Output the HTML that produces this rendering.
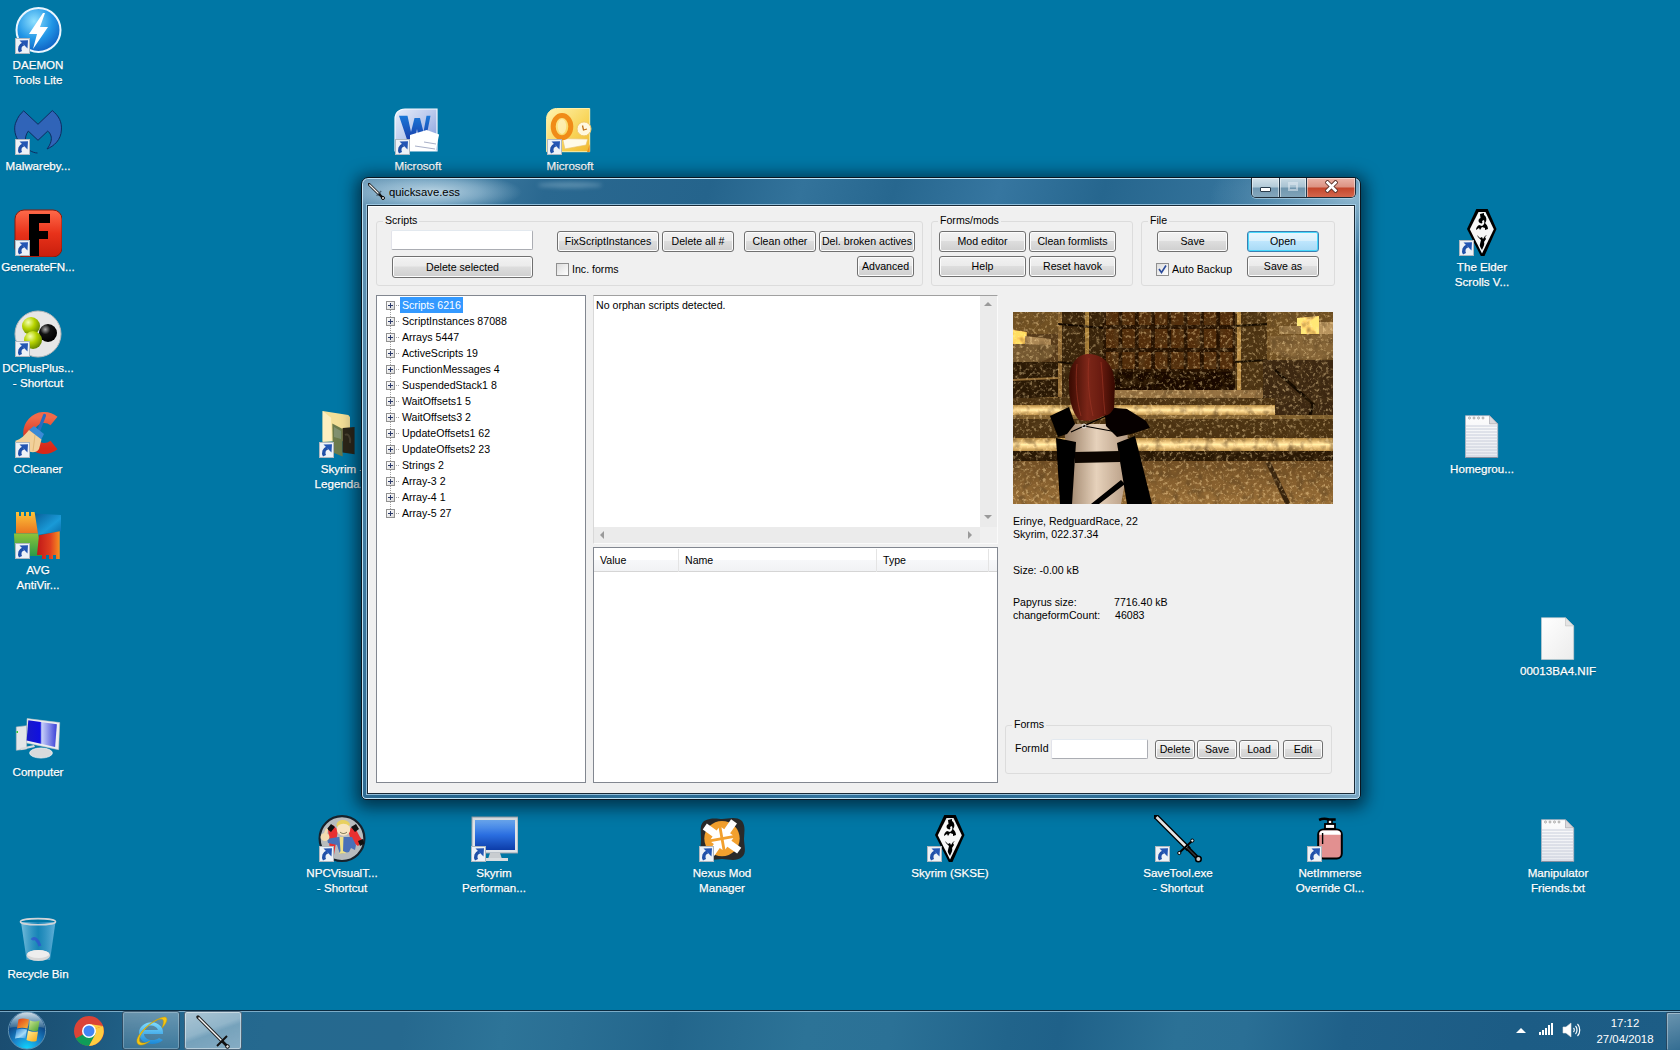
<!DOCTYPE html>
<html><head><meta charset="utf-8">
<style>
*{box-sizing:border-box;margin:0;padding:0}
html,body{width:1680px;height:1050px;overflow:hidden}
body{background:#0077a5;font-family:"Liberation Sans",sans-serif;position:relative}
.a{position:absolute}
/* desktop icons */
.ic{position:absolute;width:76px;height:100px}
.ic .g{position:absolute;left:14px;top:0;width:48px;height:48px}
.ic .t{position:absolute;left:-4px;top:50px;width:84px;text-align:center;color:#fff;font-size:11.6px;line-height:15px;-webkit-text-stroke:.25px #fff;text-shadow:0 1px 1px rgba(0,30,50,.35)}
.sc{position:absolute;left:0;top:32px}
/* window */
#win{left:361px;top:177px;width:1000px;height:623px;border:1px solid #0a1620;border-radius:7px 7px 5px 5px;
 background:linear-gradient(90deg,rgba(255,255,255,0) 0%,rgba(255,255,255,0) 100%),linear-gradient(105deg,#6a98b6 0%,#4a84a8 6%,#2a6890 16%,#25648c 30%,#33739b 38%,#27678f 46%,#3676a0 55%,#26668e 64%,#33729a 74%,#2a6a92 84%,#6292b2 94%,#7aa6c2 100%);box-shadow:0 3px 16px 5px rgba(0,10,20,.6),inset 0 0 0 1px #bfe3f5}
#client{left:368px;top:206px;width:986px;height:587px;background:#f0f0f0;box-shadow:0 0 0 1px #1a2a36,0 0 0 2px rgba(170,210,235,.8),inset 1px 1px 0 #fff}
.f{font-size:10.6px;color:#000;line-height:13px;white-space:nowrap}
.btn{position:absolute;border:1px solid #707070;border-radius:3px;background:linear-gradient(#f2f2f2 0%,#ebebeb 45%,#dddddd 50%,#cfcfcf 100%);font-size:10.6px;text-align:center;color:#000;box-shadow:inset 0 0 0 1px #fcfcfc}
.grp{position:absolute;border:1px solid #dcdcdc;border-radius:3px}
.grp span{position:absolute;left:6px;top:-8px;background:#f0f0f0;padding:0 2px;font-size:10.6px;line-height:13px}
.tb{position:absolute;background:#fff;border:1px solid #abadb3;border-top-color:#e3e9ef;border-left-color:#e2e3ea;border-radius:2px}
.cb{position:absolute;width:13px;height:13px;border:1px solid #8f8f8f;background:linear-gradient(135deg,#dcdcdc,#fff)}
.tree{position:absolute;background:#fff;border:1px solid #828790}
.ti{position:absolute;left:0;font-size:10.6px;line-height:16px;height:16px;white-space:nowrap}
/* taskbar */
#task{left:0;top:1010px;width:1680px;height:40px;background:linear-gradient(100deg,#1a4c70 0%,#1c5478 4%,#22668e 10%,#25698f 16%,#26698f 24%,#2d7498 30%,#2a6f94 34%,#23668c 40%,#2c7397 48%,#2b7196 53%,#21648b 60%,#1f6189 63%,#2b7196 70%,#2a6f95 74%,#1f6089 80%,#1c5c85 90%,#1d5d86 100%);border-top:1px solid #0a2a40}
</style></head><body>

<div id="desk">
<div class="ic" style="left:0px;top:7px"><div class="g"><svg width="48" height="48"><defs><radialGradient id="dg" cx=".4" cy=".3" r=".75"><stop offset="0" stop-color="#8fe0ff"/><stop offset=".55" stop-color="#2196e6"/><stop offset="1" stop-color="#0d5cc0"/></radialGradient></defs><circle cx="24.5" cy="23" r="22" fill="url(#dg)" stroke="#eaf6ff" stroke-width="2"/><path d="M29 6 L15 27 L23 27 L19 42 L34 20 L26 20 L31 6Z" fill="#fff"/></svg><svg class="sc" width="16" height="16" style="left:1px;top:31px"><rect x=".5" y=".5" width="14" height="15" fill="#eef2f7" stroke="#b0b8c0"/><path d="M5.5 13.8 C3.8 10.5 5 7 8.5 5.8" stroke="#2050a8" stroke-width="3.4" fill="none"/><path d="M4.5 2.5 L13 2.2 L12.5 10.5Z" fill="#2456b4"/></svg></div><div class="t">DAEMON<br>Tools Lite</div></div>
<div class="ic" style="left:0px;top:108px"><div class="g"><svg width="48" height="48"><path d="M9.7 2.9 L24 16.3 L38.3 2.6 C45 8 48 14 47.4 22 C47 32 40 38 33 41 C37 36 38 31 37 28 C36 25 35 24 33.7 23.1 L24 32.3 L14.3 23.1 C12 26 11 30 11.5 34 C12 38 14 41 16 42 C14 42 8 38 4 32 C0 26 0 18 2 14 C4 9 6 6 9.7 2.9Z" fill="#3064b8" stroke="#0e2c60" stroke-width="1"/><path d="M15 42 C18 44 21 45 23.5 45" stroke="#0e2c60" stroke-width="1" fill="none"/></svg><svg class="sc" width="16" height="16" style="left:1px;top:31px"><rect x=".5" y=".5" width="14" height="15" fill="#eef2f7" stroke="#b0b8c0"/><path d="M5.5 13.8 C3.8 10.5 5 7 8.5 5.8" stroke="#2050a8" stroke-width="3.4" fill="none"/><path d="M4.5 2.5 L13 2.2 L12.5 10.5Z" fill="#2456b4"/></svg></div><div class="t">Malwareby...</div></div>
<div class="ic" style="left:0px;top:209px"><div class="g"><svg width="48" height="48"><defs><linearGradient id="fr" x1="0" y1="0" x2="0" y2="1"><stop offset="0" stop-color="#ff6a4a"/><stop offset=".5" stop-color="#e8321a"/><stop offset="1" stop-color="#c81e0c"/></linearGradient></defs><rect x="1" y="1" width="47" height="47" rx="9" fill="url(#fr)" stroke="#8a1a0a"/><path d="M15 5 H36 V14 H25 V22 H34 V30 H25 V47 H15Z" fill="#000"/></svg><svg class="sc" width="16" height="16" style="left:1px;top:31px"><rect x=".5" y=".5" width="14" height="15" fill="#eef2f7" stroke="#b0b8c0"/><path d="M5.5 13.8 C3.8 10.5 5 7 8.5 5.8" stroke="#2050a8" stroke-width="3.4" fill="none"/><path d="M4.5 2.5 L13 2.2 L12.5 10.5Z" fill="#2456b4"/></svg></div><div class="t">GenerateFN...</div></div>
<div class="ic" style="left:0px;top:310px"><div class="g"><svg width="48" height="48"><defs><radialGradient id="gb" cx=".35" cy=".3" r=".7"><stop offset="0" stop-color="#f4ffb0"/><stop offset=".5" stop-color="#b8d400"/><stop offset="1" stop-color="#6a8a00"/></radialGradient><radialGradient id="bb" cx=".35" cy=".3" r=".7"><stop offset="0" stop-color="#aaa"/><stop offset=".4" stop-color="#111"/><stop offset="1" stop-color="#000"/></radialGradient></defs><circle cx="24" cy="24" r="23" fill="#e6e6e6" stroke="#bbb"/><circle cx="17" cy="16" r="9" fill="url(#gb)"/><circle cx="34" cy="23" r="9" fill="url(#bb)"/><circle cx="19" cy="30" r="9" fill="url(#gb)"/></svg><svg class="sc" width="16" height="16" style="left:1px;top:31px"><rect x=".5" y=".5" width="14" height="15" fill="#eef2f7" stroke="#b0b8c0"/><path d="M5.5 13.8 C3.8 10.5 5 7 8.5 5.8" stroke="#2050a8" stroke-width="3.4" fill="none"/><path d="M4.5 2.5 L13 2.2 L12.5 10.5Z" fill="#2456b4"/></svg></div><div class="t">DCPlusPlus...<br>- Shortcut</div></div>
<div class="ic" style="left:0px;top:411px"><div class="g"><svg width="48" height="48"><defs><linearGradient id="ccr" x1="0" y1="0" x2="0" y2="1"><stop offset="0" stop-color="#f06a4a"/><stop offset=".5" stop-color="#e0402a"/><stop offset="1" stop-color="#d82818"/></linearGradient></defs><path d="M40 10 A15.5 15.5 0 1 0 40 34" stroke="url(#ccr)" stroke-width="11" fill="none"/><path d="M30.5 4.5 L23 24" stroke="#2a6cc0" stroke-width="3.2" stroke-linecap="round"/><path d="M15 19 L20 15 L30 23 L27 29Z" fill="#3a8ad6"/><path d="M15 19 L27.5 28.5 L25 38 C21 44 12 42 1 30 C7 28 11 24 15 19Z" fill="#f2d09a"/><path d="M21 24 L19 40" stroke="#e0b878" stroke-width="1"/></svg><svg class="sc" width="16" height="16" style="left:1px;top:31px"><rect x=".5" y=".5" width="14" height="15" fill="#eef2f7" stroke="#b0b8c0"/><path d="M5.5 13.8 C3.8 10.5 5 7 8.5 5.8" stroke="#2050a8" stroke-width="3.4" fill="none"/><path d="M4.5 2.5 L13 2.2 L12.5 10.5Z" fill="#2456b4"/></svg></div><div class="t">CCleaner</div></div>
<div class="ic" style="left:0px;top:512px"><div class="g"><svg width="48" height="48"><defs><linearGradient id="ao" x1="0" y1="0" x2="0" y2="1"><stop offset="0" stop-color="#fcc43a"/><stop offset="1" stop-color="#ea7420"/></linearGradient><linearGradient id="ab" x1="0" y1="0" x2="1" y2="1"><stop offset="0" stop-color="#0a5c98"/><stop offset=".6" stop-color="#1ea0e0"/><stop offset="1" stop-color="#0a6aa8"/></linearGradient><linearGradient id="ag" x1="0" y1="0" x2="0" y2="1"><stop offset="0" stop-color="#8cc43a"/><stop offset="1" stop-color="#2a9a48"/></linearGradient><linearGradient id="ar" x1="0" y1="0" x2="1" y2="0"><stop offset="0" stop-color="#c01818"/><stop offset=".6" stop-color="#e04020"/><stop offset="1" stop-color="#f89020"/></linearGradient></defs><path d="M20.6 1.6 L47 3 L47 19.3 L24 22.7Z" fill="url(#ab)" opacity=".85"/><path d="M2 0 H5 V4 H7 V0 H10 V4 H12 V0 H15 V4 H17 V0 H20.6 L24 21.5 H2Z" fill="url(#ao)"/><path d="M0 21.6 H24 L28.6 44 H1Z" fill="url(#ag)"/><path d="M25 23.3 L45.7 19.3 V47 H42 V43 H39 V47 H35 V43 H32 V47 H28 V43 H23Z" fill="url(#ar)"/></svg><svg class="sc" width="16" height="16" style="left:1px;top:31px"><rect x=".5" y=".5" width="14" height="15" fill="#eef2f7" stroke="#b0b8c0"/><path d="M5.5 13.8 C3.8 10.5 5 7 8.5 5.8" stroke="#2050a8" stroke-width="3.4" fill="none"/><path d="M4.5 2.5 L13 2.2 L12.5 10.5Z" fill="#2456b4"/></svg></div><div class="t">AVG<br>AntiVir...</div></div>
<div class="ic" style="left:0px;top:714px"><div class="g"><svg width="48" height="48"><defs><linearGradient id="cs" x1="0" y1="0" x2="1" y2="0"><stop offset="0" stop-color="#1a1ac8"/><stop offset=".45" stop-color="#1010e0"/><stop offset=".5" stop-color="#c8d0f8"/><stop offset="1" stop-color="#3a40d8"/></linearGradient></defs><path d="M2.3 12.9 L12.6 11.7 L12.6 35.1 L2.3 36.3Z" fill="#e4e6e8" stroke="#b8bcc0" stroke-width=".6"/><rect x="2.5" y="17" width="1.5" height="2" fill="#3c3"/><path d="M6 34 L20 31 L21 33 L7 36Z" fill="#d8dadc"/><path d="M13.1 4.6 L45.7 8.6 L44.6 35.7 L12.6 28.9Z" fill="#eceef0" stroke="#c0c4c8" stroke-width=".6"/><path d="M14.3 6.3 L42.9 10.3 L41.1 32.9 L12.6 26.6Z" fill="url(#cs)"/><ellipse cx="27" cy="39" rx="11.4" ry="5" fill="#d8dadc" stroke="#f0f0f0" stroke-width=".8"/></svg></div><div class="t">Computer</div></div>
<div class="ic" style="left:0px;top:916px"><div class="g"><svg width="48" height="48"><defs><linearGradient id="rb" x1="0" x2="1"><stop offset="0" stop-color="#a8dcf4" stop-opacity=".7"/><stop offset=".5" stop-color="#3a9ad0" stop-opacity=".4"/><stop offset="1" stop-color="#8ccaee" stop-opacity=".7"/></linearGradient></defs><path d="M7 6 L12.6 44 L36 44 L41.5 6Z" fill="url(#rb)"/><path d="M18 24 C20 20 24 24 26 30" stroke="#3050d0" stroke-width="3" fill="none" opacity=".7"/><ellipse cx="24.3" cy="39.5" rx="11.7" ry="5.5" fill="#d8d8d8"/><ellipse cx="24.3" cy="38" rx="11" ry="4" fill="#eee"/><ellipse cx="24" cy="5.7" rx="17.5" ry="3.1" fill="none" stroke="#d0d4d8" stroke-width="1.6"/></svg></div><div class="t">Recycle Bin</div></div>
<div class="ic" style="left:304px;top:411px"><div class="g"><svg width="48" height="48"><path d="M4.6 0 L30.3 3.9 L32 6 L32 30 L4.6 30.7Z" fill="#f4e098"/><path d="M4.6 0 L13.1 6.7 L13.7 30.1 L4.6 30.7Z" fill="#fcefc0"/><path d="M14.3 12.4 L24.6 18.1 L24.6 45.6 L14.9 41.6Z" fill="#6c7a4c"/><path d="M16 16 L23 20 L23 28 L16 26Z" fill="#8a9a80" opacity=".7"/><path d="M24.6 17 L36.6 15.9 L36.6 43.3 L24.6 41.6Z" fill="#2c2618"/><path d="M27 24 C30 22 33 26 32 32" stroke="#4a4230" stroke-width="2" fill="none"/></svg><svg class="sc" width="16" height="16" style="left:1px;top:31px"><rect x=".5" y=".5" width="14" height="15" fill="#eef2f7" stroke="#b0b8c0"/><path d="M5.5 13.8 C3.8 10.5 5 7 8.5 5.8" stroke="#2050a8" stroke-width="3.4" fill="none"/><path d="M4.5 2.5 L13 2.2 L12.5 10.5Z" fill="#2456b4"/></svg></div><div class="t">Skyrim -<br>Legenda...</div></div>
<div class="ic" style="left:380px;top:108px"><div class="g"><svg width="48" height="48"><defs><linearGradient id="wbg" x1="0" y1="0" x2="1" y2="1"><stop offset="0" stop-color="#e8eefa"/><stop offset=".5" stop-color="#b8c8ec"/><stop offset="1" stop-color="#7a94d8"/></linearGradient><linearGradient id="wW" x1="0" y1="0" x2="0" y2="1"><stop offset="0" stop-color="#1a78d8"/><stop offset="1" stop-color="#1a3ca8"/></linearGradient></defs><path d="M11 1 H43 V43 H1 V11 C1 5 5 1 11 1Z" fill="url(#wbg)" stroke="#f4f8ff" stroke-width="1.2"/><path d="M5 7.7 H13.5 L17 24 L20.5 10 H26 L29.5 24 L32.5 7.7 H36.5 L31.5 33 H25.5 L23 21 L20.3 33 H13.5Z" fill="url(#wW)"/><path d="M16 27 L32.6 22 L45.1 26.6 L41.7 43.1 H16Z" fill="#fff"/><path d="M21 38 L41 41 M30 34 L42 36" stroke="#a8b0c8" stroke-width="1"/></svg><svg class="sc" width="16" height="16" style="left:1px;top:31px"><rect x=".5" y=".5" width="14" height="15" fill="#eef2f7" stroke="#b0b8c0"/><path d="M5.5 13.8 C3.8 10.5 5 7 8.5 5.8" stroke="#2050a8" stroke-width="3.4" fill="none"/><path d="M4.5 2.5 L13 2.2 L12.5 10.5Z" fill="#2456b4"/></svg></div><div class="t">Microsoft</div></div>
<div class="ic" style="left:532px;top:108px"><div class="g"><svg width="48" height="48"><defs><linearGradient id="obg" x1="0" y1="0" x2="1" y2="1"><stop offset="0" stop-color="#fff4b0"/><stop offset=".6" stop-color="#f8d458"/><stop offset="1" stop-color="#f0b830"/></linearGradient></defs><path d="M10.6 0.5 H43.7 V43.7 H0.6 V10.5 C0.6 5 5 0.5 10.6 0.5Z" fill="url(#obg)" stroke="#fff0a8" stroke-width="1"/><path d="M16.6 30.6 L41.7 31.1 L40 37 L18.9 40.9Z" fill="#fffbea" stroke="#e8c068" stroke-width=".6"/><ellipse cx="16" cy="18.6" rx="8.8" ry="11.2" fill="none" stroke="#f08c18" stroke-width="5"/><ellipse cx="16" cy="18.6" rx="4.2" ry="7.4" fill="#fff6d0" opacity=".6"/><circle cx="38" cy="20.9" r="7" fill="#fff8e0" stroke="#f0c868" stroke-width="1"/><path d="M36.5 17.5 L37.5 22 L41 21" stroke="#c07018" stroke-width="1.3" fill="none"/><path d="M41 44 L43.7 36 V44Z" fill="#e89020"/></svg><svg class="sc" width="16" height="16" style="left:1px;top:31px"><rect x=".5" y=".5" width="14" height="15" fill="#eef2f7" stroke="#b0b8c0"/><path d="M5.5 13.8 C3.8 10.5 5 7 8.5 5.8" stroke="#2050a8" stroke-width="3.4" fill="none"/><path d="M4.5 2.5 L13 2.2 L12.5 10.5Z" fill="#2456b4"/></svg></div><div class="t">Microsoft</div></div>
<div class="ic" style="left:304px;top:815px"><div class="g"><svg width="48" height="48"><circle cx="24" cy="23.6" r="22.4" fill="#b8bcbe" stroke="#16222c" stroke-width="2.2"/><path d="M10 13 L15 10 L20 15 L16 40 L12 38Z" fill="#e83030"/><path d="M30 15 L36 11 L42 22 L45 26 L40 31 L33 26Z" fill="#e83030"/><path d="M9 14 L13 9 L17 12 L13 17Z M33 12 L38 9 L41 14 L37 17Z M40 26 L45 24 L46 29 L42 31Z" fill="#111"/><path d="M20 22 L34 22 L38 30 L37 35 L33 33 L31 37 L22 39 L19 30 L10 28 L9 24Z" fill="#4a70b8"/><path d="M21.5 22 L25.5 22 L25 36 L29 38 L21 39 L22.5 36Z" fill="#f0e088"/><ellipse cx="7" cy="22" rx="4.5" ry="4" fill="#f4dcb0"/><path d="M6 18 L8 13 L10 14 L9 19Z" fill="#f4dcb0"/><circle cx="25.5" cy="14" r="6.8" fill="#f8e4c0"/><path d="M18.5 10 C19 4 29 3 32 9 L31 11 C28 8 22 8 19 12Z" fill="#e8d060"/><path d="M22 17 C24 19 27 19 29 17" stroke="#553" stroke-width=".8" fill="none"/></svg><svg class="sc" width="16" height="16" style="left:1px;top:31px"><rect x=".5" y=".5" width="14" height="15" fill="#eef2f7" stroke="#b0b8c0"/><path d="M5.5 13.8 C3.8 10.5 5 7 8.5 5.8" stroke="#2050a8" stroke-width="3.4" fill="none"/><path d="M4.5 2.5 L13 2.2 L12.5 10.5Z" fill="#2456b4"/></svg></div><div class="t">NPCVisualT...<br>- Shortcut</div></div>
<div class="ic" style="left:456px;top:815px"><div class="g"><svg width="48" height="48"><defs><linearGradient id="sp" x1="0" y1="0" x2="0" y2="1"><stop offset="0" stop-color="#6aa8f0"/><stop offset=".5" stop-color="#2a6ee0"/><stop offset="1" stop-color="#0c3ca8"/></linearGradient></defs><rect x="2" y="2" width="46" height="36" fill="#e0e4e8" stroke="#98a2ac"/><rect x="5" y="5" width="40" height="30" fill="url(#sp)"/><path d="M20 38 H30 L32 44 H18Z" fill="#c8ccd0"/><rect x="12" y="43" width="26" height="3" fill="#d8dcdf"/></svg><svg class="sc" width="16" height="16" style="left:1px;top:31px"><rect x=".5" y=".5" width="14" height="15" fill="#eef2f7" stroke="#b0b8c0"/><path d="M5.5 13.8 C3.8 10.5 5 7 8.5 5.8" stroke="#2050a8" stroke-width="3.4" fill="none"/><path d="M4.5 2.5 L13 2.2 L12.5 10.5Z" fill="#2456b4"/></svg></div><div class="t">Skyrim<br>Performan...</div></div>
<div class="ic" style="left:684px;top:815px"><div class="g"><svg width="48" height="48"><path d="M6 6 C14 2 20 4 24 4 C30 4 38 1 44 6 C48 12 46 18 46 24 C46 30 49 38 44 42 C38 47 30 44 24 44 C18 44 10 47 5 42 C1 36 3 30 3 24 C3 18 1 10 6 6Z" fill="#2a2a2a"/><circle cx="24" cy="23.6" r="17.7" fill="#f2a02e"/><g transform="translate(24 23.6) rotate(35) translate(-3 0)"><path d="M-18 -3.6 L-6 -3.6 L-6 -7 L1 0 L-6 7 L-6 3.6 L-18 3.6Z" fill="#fff"/></g><g transform="translate(24 23.6) rotate(125) translate(-3 0)"><path d="M-18 -3.6 L-6 -3.6 L-6 -7 L1 0 L-6 7 L-6 3.6 L-18 3.6Z" fill="#fff"/></g><g transform="translate(24 23.6) rotate(215) translate(-3 0)"><path d="M-18 -3.6 L-6 -3.6 L-6 -7 L1 0 L-6 7 L-6 3.6 L-18 3.6Z" fill="#fff"/></g><g transform="translate(24 23.6) rotate(305) translate(-3 0)"><path d="M-18 -3.6 L-6 -3.6 L-6 -7 L1 0 L-6 7 L-6 3.6 L-18 3.6Z" fill="#fff"/></g></svg><svg class="sc" width="16" height="16" style="left:1px;top:31px"><rect x=".5" y=".5" width="14" height="15" fill="#eef2f7" stroke="#b0b8c0"/><path d="M5.5 13.8 C3.8 10.5 5 7 8.5 5.8" stroke="#2050a8" stroke-width="3.4" fill="none"/><path d="M4.5 2.5 L13 2.2 L12.5 10.5Z" fill="#2456b4"/></svg></div><div class="t">Nexus Mod<br>Manager</div></div>
<div class="ic" style="left:912px;top:815px"><div class="g"><svg width="48" height="48"><path d="M18.3 0 H29.7 L38.5 20 L26.5 47 H22.8 L9 20Z" fill="#000"/><path d="M20.5 3 H27.5 L35.8 20.2 L24 44.5 L11.8 20.2Z" fill="#f8f8f8"/><path d="M22 5 L22.5 9 C20 10 20 13 22 14 C24 15 25 14 24 12 L26 11 C27 14 26 16 24 17 L21 16 C19 17 18 19 18 21 L21 19 L22 21 L24 18 L27 19 L27 21 L30 20 C30 17 28 15 27 14 C29 12 29 8 26 6 L26 4Z" fill="#000"/><path d="M19 26 L21 30 L20 28 L23 31 L22 35 C21 37 23 39 24 41 C25 38 27 36 26 33 L28 30 L27 28 L29 26 L27 27 L25 30 L24 28 L22 29 Z" fill="#000"/></svg><svg class="sc" width="16" height="16" style="left:1px;top:31px"><rect x=".5" y=".5" width="14" height="15" fill="#eef2f7" stroke="#b0b8c0"/><path d="M5.5 13.8 C3.8 10.5 5 7 8.5 5.8" stroke="#2050a8" stroke-width="3.4" fill="none"/><path d="M4.5 2.5 L13 2.2 L12.5 10.5Z" fill="#2456b4"/></svg></div><div class="t">Skyrim (SKSE)</div></div>
<div class="ic" style="left:1140px;top:815px"><div class="g"><svg width="48" height="48"><path d="M2 1.5 L33 32.5" stroke="#000" stroke-width="5.4" stroke-linecap="square"/><path d="M2.5 2 L33 32.5" stroke="#e8e8e8" stroke-width="2.6"/><path d="M25.5 37.5 L38 26" stroke="#000" stroke-width="2"/><circle cx="38.3" cy="25.6" r="1.6" fill="#eee" stroke="#000" stroke-width="1"/><circle cx="25.3" cy="38" r="1.6" fill="#eee" stroke="#000" stroke-width="1"/><path d="M33 32.5 L42.5 42" stroke="#000" stroke-width="4.4"/><path d="M33 32.5 L42 41.5" stroke="#333" stroke-width="1.6"/><circle cx="44.4" cy="44" r="2.8" fill="#ccc" stroke="#000" stroke-width="1.6"/></svg><svg class="sc" width="16" height="16" style="left:1px;top:31px"><rect x=".5" y=".5" width="14" height="15" fill="#eef2f7" stroke="#b0b8c0"/><path d="M5.5 13.8 C3.8 10.5 5 7 8.5 5.8" stroke="#2050a8" stroke-width="3.4" fill="none"/><path d="M4.5 2.5 L13 2.2 L12.5 10.5Z" fill="#2456b4"/></svg></div><div class="t">SaveTool.exe<br>- Shortcut</div></div>
<div class="ic" style="left:1292px;top:815px"><div class="g"><svg width="48" height="48"><path d="M13.1 5 C16 3.5 20 3.5 23 4.5 L29.7 4.5" stroke="#000" stroke-width="2.6" fill="none"/><rect x="22" y="5" width="4" height="4" fill="#fff" stroke="#000" stroke-width="1.6"/><rect x="19" y="9" width="10" height="4.8" fill="#fff" stroke="#000" stroke-width="1.8"/><rect x="12.2" y="14.6" width="23.6" height="29" rx="5" fill="#e29090" stroke="#000" stroke-width="2"/><path d="M13.3 19.7 V19 C13.3 17 15 15.6 17 15.6 H31 C33 15.6 34.8 17 34.8 19 V19.7Z" fill="#fff"/><path d="M16.6 18 V29" stroke="#000" stroke-width="1.4"/></svg><svg class="sc" width="16" height="16" style="left:1px;top:31px"><rect x=".5" y=".5" width="14" height="15" fill="#eef2f7" stroke="#b0b8c0"/><path d="M5.5 13.8 C3.8 10.5 5 7 8.5 5.8" stroke="#2050a8" stroke-width="3.4" fill="none"/><path d="M4.5 2.5 L13 2.2 L12.5 10.5Z" fill="#2456b4"/></svg></div><div class="t">NetImmerse<br>Override Cl...</div></div>
<div class="ic" style="left:1520px;top:815px"><div class="g"><svg width="48" height="48"><defs><linearGradient id="dg1b" x1="0" y1="0" x2="0" y2="1"><stop offset="0" stop-color="#fdfdfd"/><stop offset="1" stop-color="#e8eaf0"/></linearGradient></defs><path d="M7.5 4.7 H31.5 L39.7 12.9 V46.5 H7.5Z" fill="url(#dg1b)" stroke="#b0b4c0" stroke-width=".8"/><path d="M31.5 4.7 V12.9 H39.7Z" fill="#d8d8dc" stroke="#a0a0a8" stroke-width=".6"/><g stroke="#c4cad8" stroke-width=".9"><path d="M8 15 H39.3"/><path d="M8 18 H39.3"/><path d="M8 21 H39.3"/><path d="M8 24 H39.3"/><path d="M8 27 H39.3"/><path d="M8 30 H39.3"/><path d="M8 33 H39.3"/><path d="M8 36 H39.3"/><path d="M8 39 H39.3"/><path d="M8 42 H39.3"/><path d="M8 45 H39.3"/></g><g fill="#fff" stroke="#888" stroke-width=".7"><circle cx="11.5" cy="7" r="1"/><circle cx="16" cy="7" r="1"/><circle cx="20.5" cy="7" r="1"/><circle cx="25" cy="7" r="1"/></g><path d="M7.5 46.5 H39.7" stroke="#8890a0" stroke-width="1"/></svg></div><div class="t">Manipulator<br>Friends.txt</div></div>
<div class="ic" style="left:1444px;top:209px"><div class="g"><svg width="48" height="48"><path d="M18.3 0 H29.7 L38.5 20 L26.5 47 H22.8 L9 20Z" fill="#000"/><path d="M20.5 3 H27.5 L35.8 20.2 L24 44.5 L11.8 20.2Z" fill="#f8f8f8"/><path d="M22 5 L22.5 9 C20 10 20 13 22 14 C24 15 25 14 24 12 L26 11 C27 14 26 16 24 17 L21 16 C19 17 18 19 18 21 L21 19 L22 21 L24 18 L27 19 L27 21 L30 20 C30 17 28 15 27 14 C29 12 29 8 26 6 L26 4Z" fill="#000"/><path d="M19 26 L21 30 L20 28 L23 31 L22 35 C21 37 23 39 24 41 C25 38 27 36 26 33 L28 30 L27 28 L29 26 L27 27 L25 30 L24 28 L22 29 Z" fill="#000"/></svg><svg class="sc" width="16" height="16" style="left:1px;top:31px"><rect x=".5" y=".5" width="14" height="15" fill="#eef2f7" stroke="#b0b8c0"/><path d="M5.5 13.8 C3.8 10.5 5 7 8.5 5.8" stroke="#2050a8" stroke-width="3.4" fill="none"/><path d="M4.5 2.5 L13 2.2 L12.5 10.5Z" fill="#2456b4"/></svg></div><div class="t">The Elder<br>Scrolls V...</div></div>
<div class="ic" style="left:1444px;top:411px"><div class="g"><svg width="48" height="48"><defs><linearGradient id="dg1" x1="0" y1="0" x2="0" y2="1"><stop offset="0" stop-color="#fdfdfd"/><stop offset="1" stop-color="#e8eaf0"/></linearGradient></defs><path d="M7.5 4.7 H31.5 L39.7 12.9 V46.5 H7.5Z" fill="url(#dg1)" stroke="#b0b4c0" stroke-width=".8"/><path d="M31.5 4.7 V12.9 H39.7Z" fill="#d8d8dc" stroke="#a0a0a8" stroke-width=".6"/><g stroke="#c4cad8" stroke-width=".9"><path d="M8 15 H39.3"/><path d="M8 18 H39.3"/><path d="M8 21 H39.3"/><path d="M8 24 H39.3"/><path d="M8 27 H39.3"/><path d="M8 30 H39.3"/><path d="M8 33 H39.3"/><path d="M8 36 H39.3"/><path d="M8 39 H39.3"/><path d="M8 42 H39.3"/><path d="M8 45 H39.3"/></g><g fill="#fff" stroke="#888" stroke-width=".7"><circle cx="11.5" cy="7" r="1"/><circle cx="16" cy="7" r="1"/><circle cx="20.5" cy="7" r="1"/><circle cx="25" cy="7" r="1"/></g><path d="M7.5 46.5 H39.7" stroke="#8890a0" stroke-width="1"/></svg></div><div class="t">Homegrou...</div></div>
<div class="ic" style="left:1520px;top:613px"><div class="g"><svg width="48" height="48"><defs><linearGradient id="dg2" x1="0" y1="0" x2="1" y2="1"><stop offset="0" stop-color="#ffffff"/><stop offset="1" stop-color="#ececec"/></linearGradient></defs><path d="M7.5 4.7 H31.5 L39.7 12.9 V46.5 H7.5Z" fill="url(#dg2)" stroke="#d0d0d0" stroke-width=".6"/><path d="M31.5 4.7 V12.9 H39.7Z" fill="#e4e4e4" stroke="#c0c0c0" stroke-width=".6"/></svg></div><div class="t">00013BA4.NIF</div></div>
</div>

<div id="win" class="a"></div>
<div class="a" style="left:1150px;top:178px;width:210px;height:621px;border-radius:0 6px 0 0;background:radial-gradient(ellipse 140px 60px at 200px 20px,rgba(170,205,225,.75) 0%,rgba(150,190,215,.35) 60%,rgba(150,190,215,0) 100%)"></div>
<div class="a" style="left:538px;top:182px;width:64px;height:6px;border-radius:50%;background:rgba(200,225,240,.3);filter:blur(2px)"></div>
<div class="a" id="ttlglow" style="left:362px;top:178px;width:200px;height:27px;border-radius:6px 0 0 0;background:radial-gradient(ellipse 90px 20px at 70px 14px,rgba(225,240,248,.75) 0%,rgba(200,225,240,.45) 55%,rgba(180,215,235,0) 100%)"></div>
<svg class="a" style="left:368px;top:183px" width="18" height="18"><path d="M1 1.2 L11 11" stroke="#222" stroke-width="3" stroke-linecap="round"/><path d="M1.3 1.5 L11 11" stroke="#f4f4f4" stroke-width="1.1"/><path d="M8.6 12.8 L13.2 8" stroke="#3a5060" stroke-width="1.3" opacity=".8"/><path d="M11 11 L14.6 14.6" stroke="#111" stroke-width="2.4"/><circle cx="15" cy="15" r="1.5" fill="#fff" stroke="#000" stroke-width="1"/></svg>
<div class="a" style="left:389px;top:184px;font-size:11.3px;line-height:16px;color:#000">quicksave.ess</div>
<div class="a" style="left:1251px;top:178px;width:105px;height:20px;border:1px solid #1e2c38;border-top:none;border-radius:0 0 5px 5px;overflow:hidden;display:flex;box-shadow:0 1px 0 rgba(200,230,245,.55)">
<div style="width:28px;height:20px;border-right:1px solid #24384a;background:linear-gradient(#d4e2ea 0%,#b2cad8 45%,#7399b2 50%,#86a8bd 100%);box-shadow:inset 0 0 0 1px rgba(255,255,255,.5);position:relative;border-radius:0 0 0 4px"><div style="position:absolute;left:8px;top:9px;width:11px;height:5px;background:#fff;border:1px solid #2a3c4c;border-radius:1px"></div></div>
<div style="width:27px;height:20px;border-right:1px solid #24384a;background:linear-gradient(#c8dae4 0%,#a8c2d2 45%,#7096ae 50%,#82a4b9 100%);box-shadow:inset 0 0 0 1px rgba(255,255,255,.5);position:relative"><div style="position:absolute;left:8px;top:4px;width:10px;height:9px;border:2px solid rgba(225,235,242,.55);border-top-width:3px"></div></div>
<div style="flex:1;height:20px;background:linear-gradient(#eab4a8 0%,#dc9282 45%,#c4462c 50%,#d66a50 100%);box-shadow:inset 0 0 0 1px rgba(255,255,255,.45);position:relative;border-radius:0 0 4px 0"><svg style="position:absolute;left:18px;top:2px" width="13" height="13"><path d="M2.5 2.5 L10.5 10.5 M10.5 2.5 L2.5 10.5" stroke="#5a3028" stroke-width="4.4" stroke-linecap="square"/><path d="M2.5 2.5 L10.5 10.5 M10.5 2.5 L2.5 10.5" stroke="#fff" stroke-width="2.6" stroke-linecap="square"/></svg></div>
</div>
<div id="client" class="a"></div>
<div class="grp" style="left:376px;top:221px;width:547px;height:65px"><span>Scripts</span></div>
<div class="grp" style="left:931px;top:221px;width:202px;height:65px"><span>Forms/mods</span></div>
<div class="grp" style="left:1141px;top:221px;width:194px;height:65px"><span>File</span></div>
<div class="grp" style="left:1005px;top:725px;width:327px;height:49px"><span>Forms</span></div>
<div class="tb" style="left:391px;top:230px;width:142px;height:20px"></div>
<div class="tb" style="left:1051px;top:739px;width:97px;height:20px"></div>
<div class="btn" style="left:392px;top:256px;width:141px;height:22px;line-height:20px">Delete selected</div>
<div class="btn" style="left:557px;top:231px;width:102px;height:21px;line-height:19px">FixScriptInstances</div>
<div class="btn" style="left:662px;top:231px;width:72px;height:21px;line-height:19px">Delete all #</div>
<div class="btn" style="left:744px;top:231px;width:72px;height:21px;line-height:19px">Clean other</div>
<div class="btn" style="left:819px;top:231px;width:96px;height:21px;line-height:19px">Del. broken actives</div>
<div class="btn" style="left:857px;top:256px;width:57px;height:21px;line-height:19px">Advanced</div>
<div class="btn" style="left:939px;top:231px;width:87px;height:21px;line-height:19px">Mod editor</div>
<div class="btn" style="left:1029px;top:231px;width:87px;height:21px;line-height:19px">Clean formlists</div>
<div class="btn" style="left:939px;top:256px;width:87px;height:21px;line-height:19px">Help</div>
<div class="btn" style="left:1029px;top:256px;width:87px;height:21px;line-height:19px">Reset havok</div>
<div class="btn" style="left:1157px;top:231px;width:71px;height:21px;line-height:19px">Save</div>
<div class="btn" style="left:1247px;top:231px;width:72px;height:21px;line-height:19px;border-color:#3c7fb1;background:linear-gradient(#eaf6fd 0%,#d9f0fc 45%,#bee6fd 50%,#a7d9f5 100%);box-shadow:inset 0 0 0 1px #48d8fb">Open</div>
<div class="btn" style="left:1247px;top:256px;width:72px;height:21px;line-height:19px">Save as</div>
<div class="btn" style="left:1155px;top:740px;width:40px;height:19px;line-height:17px">Delete</div>
<div class="btn" style="left:1197px;top:740px;width:40px;height:19px;line-height:17px">Save</div>
<div class="btn" style="left:1239px;top:740px;width:40px;height:19px;line-height:17px">Load</div>
<div class="btn" style="left:1283px;top:740px;width:40px;height:19px;line-height:17px">Edit</div>
<div class="cb" style="left:556px;top:263px"></div><div class="a f" style="left:572px;top:263px">Inc. forms</div>
<div class="cb" style="left:1156px;top:263px"><svg width="11" height="11" style="position:absolute;left:0;top:0"><path d="M2 5 L4.5 8.5 L9 1.5" stroke="#2a4a9a" stroke-width="1.6" fill="none"/></svg></div><div class="a f" style="left:1172px;top:263px">Auto Backup</div>
<div class="tree" style="left:376px;top:295px;width:210px;height:488px"></div>
<div class="a" style="left:390px;top:310px;width:1px;height:200px;background:repeating-linear-gradient(#a0a0a0 0 1px,transparent 1px 2px)"></div>
<div class="a" style="left:386px;top:301px;width:9px;height:9px;border:1px solid #919191;background:linear-gradient(135deg,#fff,#d8d8d8)"><div style="position:absolute;left:1px;top:3px;width:5px;height:1px;background:#2b3a6a"></div><div style="position:absolute;left:3px;top:1px;width:1px;height:5px;background:#2b3a6a"></div></div><div class="a" style="left:396px;top:305px;width:4px;height:1px;background:repeating-linear-gradient(90deg,#a0a0a0 0 1px,transparent 1px 2px)"></div><div class="a" style="left:400px;top:297px;width:63px;height:16px;background:#3399ff"></div><div class="a f" style="left:402px;top:298px;color:#fff;line-height:14px">Scripts 6216</div>
<div class="a" style="left:386px;top:317px;width:9px;height:9px;border:1px solid #919191;background:linear-gradient(135deg,#fff,#d8d8d8)"><div style="position:absolute;left:1px;top:3px;width:5px;height:1px;background:#2b3a6a"></div><div style="position:absolute;left:3px;top:1px;width:1px;height:5px;background:#2b3a6a"></div></div><div class="a" style="left:396px;top:321px;width:4px;height:1px;background:repeating-linear-gradient(90deg,#a0a0a0 0 1px,transparent 1px 2px)"></div><div class="a f" style="left:402px;top:314px;line-height:14px">ScriptInstances 87088</div>
<div class="a" style="left:386px;top:333px;width:9px;height:9px;border:1px solid #919191;background:linear-gradient(135deg,#fff,#d8d8d8)"><div style="position:absolute;left:1px;top:3px;width:5px;height:1px;background:#2b3a6a"></div><div style="position:absolute;left:3px;top:1px;width:1px;height:5px;background:#2b3a6a"></div></div><div class="a" style="left:396px;top:337px;width:4px;height:1px;background:repeating-linear-gradient(90deg,#a0a0a0 0 1px,transparent 1px 2px)"></div><div class="a f" style="left:402px;top:330px;line-height:14px">Arrays 5447</div>
<div class="a" style="left:386px;top:349px;width:9px;height:9px;border:1px solid #919191;background:linear-gradient(135deg,#fff,#d8d8d8)"><div style="position:absolute;left:1px;top:3px;width:5px;height:1px;background:#2b3a6a"></div><div style="position:absolute;left:3px;top:1px;width:1px;height:5px;background:#2b3a6a"></div></div><div class="a" style="left:396px;top:353px;width:4px;height:1px;background:repeating-linear-gradient(90deg,#a0a0a0 0 1px,transparent 1px 2px)"></div><div class="a f" style="left:402px;top:346px;line-height:14px">ActiveScripts 19</div>
<div class="a" style="left:386px;top:365px;width:9px;height:9px;border:1px solid #919191;background:linear-gradient(135deg,#fff,#d8d8d8)"><div style="position:absolute;left:1px;top:3px;width:5px;height:1px;background:#2b3a6a"></div><div style="position:absolute;left:3px;top:1px;width:1px;height:5px;background:#2b3a6a"></div></div><div class="a" style="left:396px;top:369px;width:4px;height:1px;background:repeating-linear-gradient(90deg,#a0a0a0 0 1px,transparent 1px 2px)"></div><div class="a f" style="left:402px;top:362px;line-height:14px">FunctionMessages 4</div>
<div class="a" style="left:386px;top:381px;width:9px;height:9px;border:1px solid #919191;background:linear-gradient(135deg,#fff,#d8d8d8)"><div style="position:absolute;left:1px;top:3px;width:5px;height:1px;background:#2b3a6a"></div><div style="position:absolute;left:3px;top:1px;width:1px;height:5px;background:#2b3a6a"></div></div><div class="a" style="left:396px;top:385px;width:4px;height:1px;background:repeating-linear-gradient(90deg,#a0a0a0 0 1px,transparent 1px 2px)"></div><div class="a f" style="left:402px;top:378px;line-height:14px">SuspendedStack1 8</div>
<div class="a" style="left:386px;top:397px;width:9px;height:9px;border:1px solid #919191;background:linear-gradient(135deg,#fff,#d8d8d8)"><div style="position:absolute;left:1px;top:3px;width:5px;height:1px;background:#2b3a6a"></div><div style="position:absolute;left:3px;top:1px;width:1px;height:5px;background:#2b3a6a"></div></div><div class="a" style="left:396px;top:401px;width:4px;height:1px;background:repeating-linear-gradient(90deg,#a0a0a0 0 1px,transparent 1px 2px)"></div><div class="a f" style="left:402px;top:394px;line-height:14px">WaitOffsets1 5</div>
<div class="a" style="left:386px;top:413px;width:9px;height:9px;border:1px solid #919191;background:linear-gradient(135deg,#fff,#d8d8d8)"><div style="position:absolute;left:1px;top:3px;width:5px;height:1px;background:#2b3a6a"></div><div style="position:absolute;left:3px;top:1px;width:1px;height:5px;background:#2b3a6a"></div></div><div class="a" style="left:396px;top:417px;width:4px;height:1px;background:repeating-linear-gradient(90deg,#a0a0a0 0 1px,transparent 1px 2px)"></div><div class="a f" style="left:402px;top:410px;line-height:14px">WaitOffsets3 2</div>
<div class="a" style="left:386px;top:429px;width:9px;height:9px;border:1px solid #919191;background:linear-gradient(135deg,#fff,#d8d8d8)"><div style="position:absolute;left:1px;top:3px;width:5px;height:1px;background:#2b3a6a"></div><div style="position:absolute;left:3px;top:1px;width:1px;height:5px;background:#2b3a6a"></div></div><div class="a" style="left:396px;top:433px;width:4px;height:1px;background:repeating-linear-gradient(90deg,#a0a0a0 0 1px,transparent 1px 2px)"></div><div class="a f" style="left:402px;top:426px;line-height:14px">UpdateOffsets1 62</div>
<div class="a" style="left:386px;top:445px;width:9px;height:9px;border:1px solid #919191;background:linear-gradient(135deg,#fff,#d8d8d8)"><div style="position:absolute;left:1px;top:3px;width:5px;height:1px;background:#2b3a6a"></div><div style="position:absolute;left:3px;top:1px;width:1px;height:5px;background:#2b3a6a"></div></div><div class="a" style="left:396px;top:449px;width:4px;height:1px;background:repeating-linear-gradient(90deg,#a0a0a0 0 1px,transparent 1px 2px)"></div><div class="a f" style="left:402px;top:442px;line-height:14px">UpdateOffsets2 23</div>
<div class="a" style="left:386px;top:461px;width:9px;height:9px;border:1px solid #919191;background:linear-gradient(135deg,#fff,#d8d8d8)"><div style="position:absolute;left:1px;top:3px;width:5px;height:1px;background:#2b3a6a"></div><div style="position:absolute;left:3px;top:1px;width:1px;height:5px;background:#2b3a6a"></div></div><div class="a" style="left:396px;top:465px;width:4px;height:1px;background:repeating-linear-gradient(90deg,#a0a0a0 0 1px,transparent 1px 2px)"></div><div class="a f" style="left:402px;top:458px;line-height:14px">Strings 2</div>
<div class="a" style="left:386px;top:477px;width:9px;height:9px;border:1px solid #919191;background:linear-gradient(135deg,#fff,#d8d8d8)"><div style="position:absolute;left:1px;top:3px;width:5px;height:1px;background:#2b3a6a"></div><div style="position:absolute;left:3px;top:1px;width:1px;height:5px;background:#2b3a6a"></div></div><div class="a" style="left:396px;top:481px;width:4px;height:1px;background:repeating-linear-gradient(90deg,#a0a0a0 0 1px,transparent 1px 2px)"></div><div class="a f" style="left:402px;top:474px;line-height:14px">Array-3 2</div>
<div class="a" style="left:386px;top:493px;width:9px;height:9px;border:1px solid #919191;background:linear-gradient(135deg,#fff,#d8d8d8)"><div style="position:absolute;left:1px;top:3px;width:5px;height:1px;background:#2b3a6a"></div><div style="position:absolute;left:3px;top:1px;width:1px;height:5px;background:#2b3a6a"></div></div><div class="a" style="left:396px;top:497px;width:4px;height:1px;background:repeating-linear-gradient(90deg,#a0a0a0 0 1px,transparent 1px 2px)"></div><div class="a f" style="left:402px;top:490px;line-height:14px">Array-4 1</div>
<div class="a" style="left:386px;top:509px;width:9px;height:9px;border:1px solid #919191;background:linear-gradient(135deg,#fff,#d8d8d8)"><div style="position:absolute;left:1px;top:3px;width:5px;height:1px;background:#2b3a6a"></div><div style="position:absolute;left:3px;top:1px;width:1px;height:5px;background:#2b3a6a"></div></div><div class="a" style="left:396px;top:513px;width:4px;height:1px;background:repeating-linear-gradient(90deg,#a0a0a0 0 1px,transparent 1px 2px)"></div><div class="a f" style="left:402px;top:506px;line-height:14px">Array-5 27</div>
<div class="a" style="left:593px;top:295px;width:405px;height:249px;background:#fff;border:1px solid;border-color:#a0a0a0 #fafafa #fafafa #d8d8d8"></div>
<div class="a f" style="left:596px;top:299px">No orphan scripts detected.</div>
<div class="a" style="left:980px;top:296px;width:17px;height:231px;background:#ebebeb"></div>
<div class="a" style="left:594px;top:527px;width:386px;height:16px;background:#ebebeb"></div>
<div class="a" style="left:980px;top:527px;width:17px;height:16px;background:#f0f0f0"></div>
<svg class="a" style="left:983px;top:300px" width="10" height="8"><path d="M1 6 L5 2 L9 6Z" fill="#9a9a9a"/></svg><svg class="a" style="left:983px;top:513px" width="10" height="8"><path d="M1 2 L5 6 L9 2Z" fill="#9a9a9a"/></svg><svg class="a" style="left:598px;top:530px" width="8" height="10"><path d="M6 1 L2 5 L6 9Z" fill="#9a9a9a"/></svg><svg class="a" style="left:966px;top:530px" width="8" height="10"><path d="M2 1 L6 5 L2 9Z" fill="#9a9a9a"/></svg>
<div class="a" style="left:593px;top:547px;width:405px;height:236px;background:#fff;border:1px solid #828790"></div>
<div class="a" style="left:594px;top:548px;width:403px;height:24px;background:linear-gradient(#ffffff 0%,#ffffff 50%,#f7f8fa 51%,#f1f2f4 100%);border-bottom:1px solid #d5d5d5"></div>
<div class="a" style="left:678px;top:549px;width:1px;height:23px;background:#e4e4e4"></div><div class="a" style="left:876px;top:549px;width:1px;height:23px;background:#e4e4e4"></div><div class="a" style="left:988px;top:549px;width:1px;height:23px;background:#e4e4e4"></div><div class="a f" style="left:600px;top:554px">Value</div><div class="a f" style="left:685px;top:554px">Name</div><div class="a f" style="left:883px;top:554px">Type</div>
<div class="a" id="shot" style="left:1013px;top:312px;width:320px;height:192px;overflow:hidden;filter:hue-rotate(-6deg) saturate(1.25) contrast(1.12)"><svg width="320" height="192" viewBox="0 0 320 192">
<defs>
<linearGradient id="flr" x1="0" y1="0" x2="0" y2="1"><stop offset="0" stop-color="#6a5634"/><stop offset="1" stop-color="#8c7448"/></linearGradient>
<linearGradient id="brt" x1="0" y1="0" x2="0" y2="1"><stop offset="0" stop-color="#a08850"/><stop offset=".5" stop-color="#f8e8b0"/><stop offset="1" stop-color="#a89058"/></linearGradient>
<linearGradient id="hair" x1="0" y1="0" x2="1" y2="0"><stop offset="0" stop-color="#38190f"/><stop offset=".4" stop-color="#6e3424"/><stop offset=".7" stop-color="#5e2a1c"/><stop offset="1" stop-color="#34170e"/></linearGradient>
<linearGradient id="skin" x1="0" y1="0" x2="1" y2="0"><stop offset="0" stop-color="#8a7a66"/><stop offset=".5" stop-color="#d6cab8"/><stop offset="1" stop-color="#a89884"/></linearGradient>
<filter id="nz" x="0" y="0" width="100%" height="100%"><feTurbulence type="fractalNoise" baseFrequency="0.3" numOctaves="3" seed="5"/><feComponentTransfer><feFuncA type="linear" slope="4" intercept="-2.1"/></feComponentTransfer><feColorMatrix type="matrix" values="0 0 0 0 0.98  0 0 0 0 0.84  0 0 0 0 0.5  0 0 0 1 0"/></filter>
<filter id="nd" x="0" y="0" width="100%" height="100%"><feTurbulence type="fractalNoise" baseFrequency="0.12" numOctaves="2" seed="9"/><feComponentTransfer><feFuncA type="linear" slope="2.6" intercept="-1.2"/></feComponentTransfer><feColorMatrix type="matrix" values="0 0 0 0 0.1  0 0 0 0 0.07  0 0 0 0 0.03  0 0 0 1 0"/></filter>
</defs>
<rect width="320" height="192" fill="#54442a"/>
<!-- left wall -->
<rect x="0" y="0" width="48" height="22" fill="#6a5834"/>
<path d="M0 18 L14 20 L13 32 L0 32Z" fill="#f4d878"/>
<path d="M12 24 L38 27 L38 33 L12 33Z" fill="#9c8860"/>
<path d="M0 32 L42 33 C42 46 32 50 20 50 L0 50Z" fill="#706040"/>
<rect x="0" y="50" width="46" height="45" fill="#2e2414"/>
<path d="M0 68 L45 66 M0 88 L45 86" stroke="#8a7448" stroke-width="2"/>
<!-- left pillar -->
<rect x="45" y="0" width="46" height="85" fill="#3a2e1a"/>
<rect x="45" y="0" width="4" height="85" fill="#8a7448"/>
<rect x="72" y="0" width="4" height="80" fill="#9a844c"/>
<path d="M45 12 L91 16 M45 50 L91 54" stroke="#1a140a" stroke-width="2"/>
<!-- gate -->
<rect x="90" y="0" width="134" height="78" fill="#2a1e10"/>
<g fill="#4e381c">
<rect x="93.0" y="0" width="12.5" height="13"/>
<rect x="109.3" y="0" width="12.5" height="13"/>
<rect x="125.6" y="0" width="12.5" height="13"/>
<rect x="141.9" y="0" width="12.5" height="13"/>
<rect x="158.2" y="0" width="12.5" height="13"/>
<rect x="174.5" y="0" width="12.5" height="13"/>
<rect x="190.8" y="0" width="12.5" height="13"/>
<rect x="207.1" y="0" width="12.5" height="13"/>
<rect x="93.0" y="17" width="12.5" height="19"/>
<rect x="109.3" y="17" width="12.5" height="19"/>
<rect x="125.6" y="17" width="12.5" height="19"/>
<rect x="141.9" y="17" width="12.5" height="19"/>
<rect x="158.2" y="17" width="12.5" height="19"/>
<rect x="174.5" y="17" width="12.5" height="19"/>
<rect x="190.8" y="17" width="12.5" height="19"/>
<rect x="207.1" y="17" width="12.5" height="19"/>
<rect x="93.0" y="40" width="12.5" height="17"/>
<rect x="109.3" y="40" width="12.5" height="17"/>
<rect x="125.6" y="40" width="12.5" height="17"/>
<rect x="141.9" y="40" width="12.5" height="17"/>
<rect x="158.2" y="40" width="12.5" height="17"/>
<rect x="174.5" y="40" width="12.5" height="17"/>
<rect x="190.8" y="40" width="12.5" height="17"/>
<rect x="207.1" y="40" width="12.5" height="17"/>
</g>
<rect x="90" y="60" width="134" height="18" fill="#20160a"/>
<!-- right pillar -->
<rect x="222" y="0" width="33" height="82" fill="#4a3c22"/>
<rect x="224" y="0" width="4" height="82" fill="#a89058"/>
<path d="M222 14 L255 12 M222 50 L255 48" stroke="#1e180c" stroke-width="2"/>
<!-- right brazier -->
<rect x="254" y="0" width="66" height="50" fill="#6a5834"/>
<path d="M284 6 L306 4 L306 22 L284 22Z" fill="#f8e088"/>
<path d="M306 10 L320 10 L320 22 L306 22Z" fill="#a8946a"/>
<path d="M266 14 L288 14 L288 22 L266 22Z" fill="#8c7a54"/>
<path d="M255 24 L320 22 L320 46 C300 50 270 48 258 38Z" fill="#7c6a46"/>
<rect x="250" y="48" width="70" height="80" fill="#3e3220"/>
<path d="M262 58 L300 92 L292 122" stroke="#1c160c" stroke-width="3" fill="none"/>
<!-- steps -->
<rect x="100" y="78" width="150" height="10" fill="#8a7650"/>
<rect x="0" y="86" width="262" height="8" fill="#4a3c22"/>
<rect x="0" y="93" width="262" height="10" fill="url(#brt)"/>
<rect x="0" y="103" width="320" height="23" fill="#4a3c22"/><rect x="0" y="103" width="320" height="4" fill="#7a6840"/>
<rect x="0" y="126" width="320" height="13" fill="url(#brt)"/>
<rect x="0" y="139" width="320" height="10" fill="#2e2414"/>
<rect x="0" y="149" width="320" height="43" fill="url(#flr)"/>
<path d="M255 150 L275 192" stroke="#3a2e1c" stroke-width="5"/>
<rect width="320" height="192" filter="url(#nd)" opacity=".6"/>
<rect width="320" height="192" filter="url(#nz)" opacity=".38"/>
<!-- woman -->
<path d="M51 112 L114 112 L116 150 L108 192 L56 192 L54 150Z" fill="url(#skin)"/>
<path d="M37 104 L56 95 L62 112 L54 122 L45 125Z" fill="#0e0c08"/>
<path d="M91 95 L114 97 L133 109 L137 116 L118 122 L104 125 L93 114Z" fill="#120e0a"/>
<path d="M43 126 L63 130 L59 192 L47 192Z" fill="#0c0a08"/>
<path d="M104 131 L122 124 L139 192 L114 192Z" fill="#0c0a08"/>
<path d="M62 140 L107 139 L107 150 L62 151Z" fill="#16120c"/>
<path d="M108 168 L112 172 L86 192 L78 192Z" fill="#0a0806"/>
<path d="M56 70 C56 52 64 42 76 42 C92 43 101 54 102 72 L101 96 C98 102 94 104 90 104 C84 108 74 110 66 108 C59 100 56 88 56 70Z" fill="url(#hair)"/><path d="M64 52 C62 70 64 90 68 104 M76 46 C74 66 76 86 80 104 M88 50 C90 66 90 86 92 102" stroke="#8a4430" stroke-width="1" fill="none" opacity=".6"/>
<path d="M58 120 L71 114 L93 104 M71 114 L104 120" stroke="#0a0806" stroke-width="1.2" fill="none"/>
<circle cx="71" cy="114" r="2" fill="none" stroke="#ddd" stroke-width=".8"/>
</svg>


</div>
<div class="a f" style="left:1013px;top:515px">Erinye, RedguardRace, 22</div>
<div class="a f" style="left:1013px;top:528px">Skyrim, 022.37.34</div>
<div class="a f" style="left:1013px;top:564px">Size: -0.00 kB</div>
<div class="a f" style="left:1013px;top:596px">Papyrus size:</div><div class="a f" style="left:1114px;top:596px">7716.40 kB</div>
<div class="a f" style="left:1013px;top:609px">changeformCount:</div><div class="a f" style="left:1115px;top:609px">46083</div>
<div class="a f" style="left:1015px;top:742px">FormId</div>


<div id="task" class="a">
<div class="a" style="left:0;top:0;width:1680px;height:1px;background:rgba(140,185,210,.85)"></div>
<svg class="a" style="left:6px;top:0px" width="44" height="40"><defs><linearGradient id="orbt" x1="0" y1="0" x2="0" y2="1"><stop offset="0" stop-color="#e8f0f4"/><stop offset=".5" stop-color="#8ab0c8"/><stop offset="1" stop-color="#3a6a90"/></linearGradient><radialGradient id="orbb" cx=".5" cy="1" r=".8"><stop offset="0" stop-color="#10d8ff"/><stop offset=".45" stop-color="#1a8ad0"/><stop offset="1" stop-color="#0a3a78"/></radialGradient><linearGradient id="fr1" x1="0" y1="0" x2="1" y2="1"><stop offset="0" stop-color="#e03818"/><stop offset="1" stop-color="#f8b838"/></linearGradient><linearGradient id="fg1" x1="0" y1="0" x2="1" y2="1"><stop offset="0" stop-color="#d0e890"/><stop offset="1" stop-color="#48a030"/></linearGradient><linearGradient id="fb1" x1="0" y1="0" x2="1" y2="1"><stop offset="0" stop-color="#1878d0"/><stop offset=".6" stop-color="#a8dcf8"/><stop offset="1" stop-color="#2890e0"/></linearGradient><linearGradient id="fy1" x1="0" y1="0" x2="1" y2="1"><stop offset="0" stop-color="#fff0a0"/><stop offset="1" stop-color="#f8a810"/></linearGradient></defs>
<circle cx="21" cy="19.5" r="18.6" fill="url(#orbb)" stroke="#5e90b0" stroke-width="1"/><path d="M3.5 17 A17.6 17.6 0 0 1 38.5 17 C30 15 12 15 3.5 17Z" fill="url(#orbt)" opacity=".9"/>
<path d="M12.5 8.5 C15.5 7 19 7.5 23 8.5 L21.5 17.5 C18 16.5 14.5 16.5 11 17.5Z" fill="url(#fr1)"/><path d="M24 9.5 C27 10.5 30 11 33.5 9.5 L32 19.5 C28.5 20.5 25.5 20 22.5 18.5Z" fill="url(#fg1)"/><path d="M10.5 18.5 C14 17.5 17.5 17.5 21 18.5 L19.5 27.5 C16 26.5 12.5 26.5 9 27.5Z" fill="url(#fb1)"/><path d="M22 19.5 C25.5 21 28.5 21 32 20.5 L30.5 30 C27 31 24 30.5 20.5 29Z" fill="url(#fy1)"/></svg>
<svg class="a" style="left:73px;top:4px" width="32" height="32"><circle cx="16" cy="16" r="15" fill="#db4437"/><path d="M16 16 L2.9 23.5 A15 15 0 0 0 16 31 L23.5 18Z" fill="#0f9d58"/><path d="M16 16 L29.9 11 A15 15 0 0 1 16 31 L23 18Z" fill="#ffcd40"/><path d="M16 16 L29.9 11 L16 9Z" fill="#ffcd40"/><circle cx="16" cy="16" r="7" fill="#fff"/><circle cx="16" cy="16" r="5.5" fill="#4285f4"/></svg>
<div class="a" style="left:122px;top:0px;width:58px;height:39px;border:1px solid rgba(20,40,60,.6);border-radius:3px;background:linear-gradient(rgba(255,255,255,.32),rgba(255,255,255,.12));box-shadow:inset 0 0 0 1px rgba(255,255,255,.25)"></div>
<svg class="a" style="left:134px;top:3px" width="34" height="34"><defs><linearGradient id="ieg" x1="0" y1="0" x2="0" y2="1"><stop offset="0" stop-color="#7fdcff"/><stop offset="1" stop-color="#1a88d8"/></linearGradient></defs><path d="M26 20 H10 C10 26 20 28 25 24 L29 26 C22 33 5 31 5 19 C5 8 22 4 28 14 C29 16 29 18 29 20Z M10 16 H24 C22 10 12 10 10 16Z" fill="url(#ieg)"/><path d="M4 30 C-2 24 18 4 31 3 C35 4 32 10 28 14 C30 8 30 5 27 5 C18 6 2 22 6 28 C8 30 12 29 16 27 C11 31 6 32 4 30Z" fill="#f6c512" stroke="#c89a00" stroke-width=".5"/></svg>
<div class="a" style="left:184px;top:0px;width:58px;height:39px;border:1px solid rgba(20,40,60,.55);border-radius:3px;background:linear-gradient(160deg,rgba(255,255,255,.62) 0%,rgba(235,245,250,.55) 45%,rgba(200,220,232,.5) 55%,rgba(215,230,240,.55) 100%);box-shadow:inset 0 0 0 1px rgba(255,255,255,.45)"></div>
<svg class="a" style="left:195px;top:4px" width="36" height="34"><path d="M3 2 L27 26" stroke="#222" stroke-width="3.4" stroke-linecap="round"/><path d="M3.5 2.5 L27 26" stroke="#fafafa" stroke-width="1.4"/><path d="M22 31 L32 21" stroke="#111" stroke-width="2"/><path d="M27 26 L32 31" stroke="#111" stroke-width="2.6"/><circle cx="32.5" cy="31.5" r="1.8" fill="#ddd" stroke="#000" stroke-width="1"/></svg>
<svg class="a" style="left:1515px;top:16px" width="12" height="8"><path d="M1 6 L6 1 L11 6Z" fill="#fff"/></svg>
<svg class="a" style="left:1538px;top:11px" width="16" height="14"><g fill="#fff"><rect x="1" y="10" width="2" height="3"/><rect x="4" y="8" width="2" height="5"/><rect x="7" y="6" width="2" height="7"/><rect x="10" y="3" width="2" height="10"/><rect x="13" y="1" width="2" height="12"/></g></svg>
<svg class="a" style="left:1561px;top:9px" width="20" height="20"><path d="M2 7 H5 L10 3 V17 L5 13 H2Z" fill="#fff" stroke="#ddd" stroke-width=".6"/><path d="M12.5 8 C13.5 9 13.5 11 12.5 12 M14.5 6 C16.5 8 16.5 12 14.5 14 M16.5 4 C19.5 7 19.5 13 16.5 16" stroke="#fff" stroke-width="1.2" fill="none"/></svg>
<div class="a" style="left:1590px;top:4px;width:70px;text-align:center;color:#fff;font-size:11.4px;line-height:16px">17:12<br>27/04/2018</div>
<div class="a" style="left:1666px;top:1px;width:14px;height:39px;border:1px solid rgba(20,40,60,.6);border-right:none;border-radius:2px 0 0 2px;background:linear-gradient(160deg,rgba(255,255,255,.35),rgba(255,255,255,.1));box-shadow:inset 1px 1px 0 rgba(255,255,255,.35)"></div>
</div>

</body></html>
